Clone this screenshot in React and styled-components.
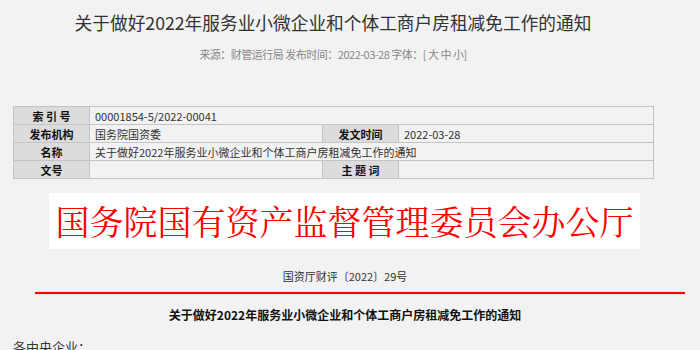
import React from 'react'
import styled, { createGlobalStyle } from 'styled-components'

const GlobalStyle = createGlobalStyle`
	html, body {
		margin: 0;
		padding: 0;
		background: #f2f2f2;
	}
	body {
		font-family: "Noto Sans CJK SC", "Noto Sans", sans-serif;
		color: #333;
	}
`

const rows = [
	{ label: '索 引 号', value: '00001854-5/2022-00041' },
	{ label: '发布机构', value: '国务院国资委', label2: '发文时间', value2: '2022-03-28' },
	{ label: '名称', value: '关于做好2022年服务业小微企业和个体工商户房租减免工作的通知' },
	{ label: '文号', value: '', label2: '主 题 词', value2: '' },
]

const App = () => {
	return (
		<Page>
			<GlobalStyle />
			<Header>
				<Title>关于做好2022年服务业小微企业和个体工商户房租减免工作的通知</Title>
				<Meta>来源：财管运行局 发布时间：2022-03-28 字体：[ 大 中 小]</Meta>
			</Header>
			<InfoTable>
				<colgroup>
					<col style={{ width: 76 }} />
					<col style={{ width: 233 }} />
					<col style={{ width: 76 }} />
					<col />
				</colgroup>
				<tbody>
					{rows.map((r) => (
						<tr key={r.label}>
							<Label>{r.label}</Label>
							{r.label2 ? (
								<>
									<Value>{r.value}</Value>
									<Label>{r.label2}</Label>
									<Value>{r.value2}</Value>
								</>
							) : (
								<Value colSpan={3}>{r.value}</Value>
							)}
						</tr>
					))}
				</tbody>
			</InfoTable>
			<Banner>
				<span>国务院国有资产监督管理委员会办公厅</span>
			</Banner>
			<Article>
				<DocNo>国资厅财评〔2022〕29号</DocNo>
				<RedLine />
				<SubTitle>关于做好2022年服务业小微企业和个体工商户房租减免工作的通知</SubTitle>
				<Greeting>各中央企业：</Greeting>
			</Article>
		</Page>
	)
}

export default App

const Page = styled.div`
	width: 700px;
	height: 350px;
	overflow: hidden;
`

const Header = styled.div`
	width: 666px;
	padding-top: 8px;
	text-align: center;
`

const Title = styled.h1`
	margin: 0;
	font-size: 17.7px;
	line-height: 28px;
	font-weight: normal;
	color: #333;
`

const Meta = styled.div`
	margin-top: 10px;
	font-size: 11px;
	line-height: 16px;
	letter-spacing: -0.5px;
	color: #888;
`

const InfoTable = styled.table`
	margin: 44px 0 0 13px;
	width: 641px;
	border-collapse: collapse;
	table-layout: fixed;
	border: 1px solid #c4c4c4;
	font-size: 11px;
`

const Label = styled.td`
	height: 17px;
	padding: 0;
	border: 1px solid #c4c4c4;
	background: #dcdcdc;
	text-align: center;
	font-weight: bold;
	color: #111;
	line-height: 16px;
`

const Value = styled.td`
	height: 17px;
	padding: 0 0 0 5px;
	border: 1px solid #c4c4c4;
	background: #f2f2f2;
	color: #333;
	line-height: 16px;
	white-space: nowrap;
	overflow: hidden;
`

const Banner = styled.div`
	margin: 14px 0 0 49px;
	width: 591px;
	height: 56px;
	background: #fff;
	display: flex;
	align-items: center;
	justify-content: center;

	span {
		color: #ff0000;
		font-size: 34px;
		line-height: 40px;
		white-space: nowrap;
		font-family: "Noto Serif CJK SC", "Noto Sans CJK SC", serif;
	}
`

const Article = styled.div`
	width: 690px;
`

const DocNo = styled.div`
	margin-top: 17px;
	text-align: center;
	font-size: 11px;
	line-height: 20px;
	color: #333;
`

const RedLine = styled.div`
	margin: 6px 0 0 35px;
	width: 650px;
	height: 2px;
	background: #ff0000;
	box-shadow: 0 0 1px #e23a3a;
`

const SubTitle = styled.div`
	margin-top: 11px;
	text-align: center;
	font-size: 12px;
	font-weight: bold;
	line-height: 20px;
	color: #111;
`

const Greeting = styled.div`
	margin-top: 12px;
	padding-left: 13px;
	font-size: 13px;
	line-height: 20px;
	color: #333;
`
